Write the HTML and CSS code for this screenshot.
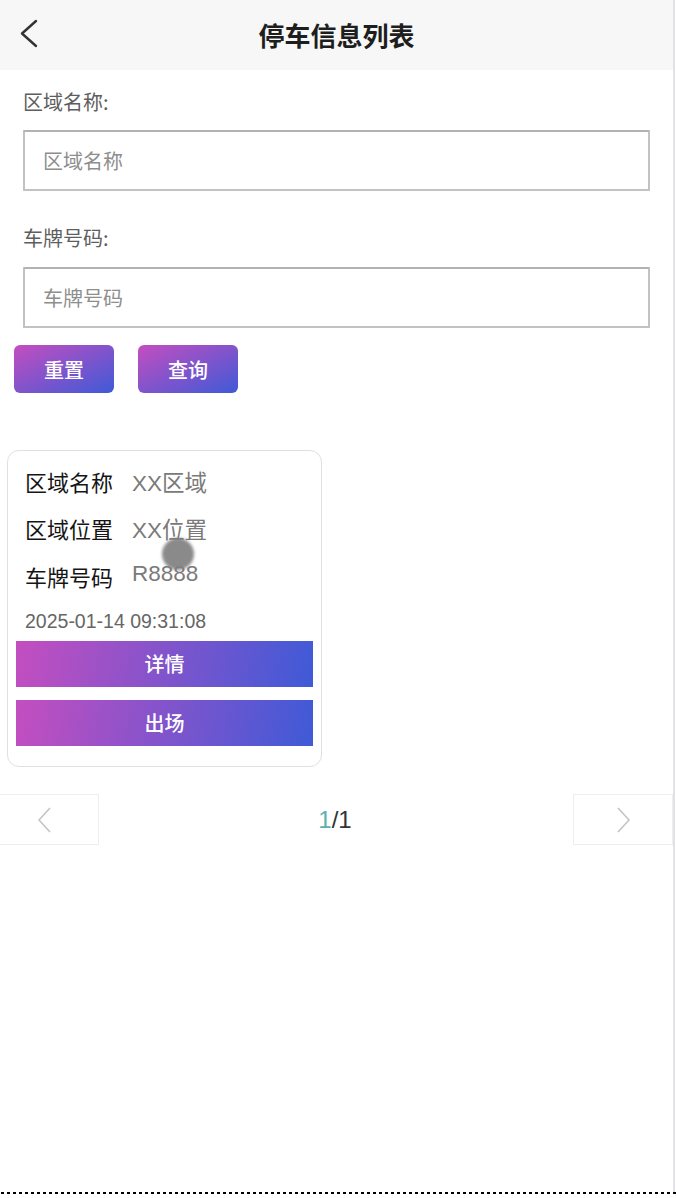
FILE: index.html
```html
<!DOCTYPE html>
<html lang="zh-CN">
<head>
<meta charset="utf-8">
<title>停车信息列表</title>
<link rel="stylesheet" href="styles.css">
</head>
<body>
<div class="page">
  <header class="topbar">
    <svg class="back" width="24" height="32" viewBox="0 0 24 32"><polyline points="18,4 4,16.5 18,29" fill="none" stroke="#333" stroke-width="2.4" stroke-linecap="round" stroke-linejoin="round"/></svg>
    <h1 class="title">停车信息列表</h1>
  </header>

  <form class="search">
    <div class="field">
      <label class="field-label">区域名称:</label>
      <input class="field-input" type="text" placeholder="区域名称">
    </div>
    <div class="field field-second">
      <label class="field-label">车牌号码:</label>
      <input class="field-input" type="text" placeholder="车牌号码">
    </div>
    <div class="actions">
      <button type="button" class="btn-small">重置</button>
      <button type="button" class="btn-small">查询</button>
    </div>
  </form>

  <div class="card">
    <div class="row"><span class="row-label">区域名称</span><span class="row-value">XX区域</span></div>
    <div class="row"><span class="row-label">区域位置</span><span class="row-value">XX位置</span></div>
    <div class="row"><span class="row-label row-label-low">车牌号码</span><span class="row-value">R8888</span></div>
    <div class="date">2025-01-14 09:31:08</div>
    <button type="button" class="btn-wide">详情</button>
    <button type="button" class="btn-wide btn-wide-second">出场</button>
    <span class="touch"></span>
  </div>

  <div class="pager">
    <div class="pager-btn pager-prev">
      <svg width="16" height="28" viewBox="0 0 16 28"><polyline points="13,2 2,14 13,26" fill="none" stroke="#c4c4c4" stroke-width="1.6" stroke-linejoin="round"/></svg>
    </div>
    <div class="pager-count"><span class="pager-current">1</span>/1</div>
    <div class="pager-btn pager-next">
      <svg width="16" height="28" viewBox="0 0 16 28"><polyline points="3,2 14,14 3,26" fill="none" stroke="#c4c4c4" stroke-width="1.6" stroke-linejoin="round"/></svg>
    </div>
  </div>
</div>
<div class="dots"></div>
</body>
</html>
```

FILE: styles.css
```css
* { box-sizing: border-box; }

html, body {
  margin: 0;
  padding: 0;
  background: #fff;
}

body {
  font-family: "Liberation Sans", "Noto Sans CJK SC", sans-serif;
  color: #222;
}

.page {
  position: relative;
  width: 675px;
  height: 1192px;
  border-right: 2px solid #e2e2e5;
}

.topbar {
  height: 70px;
  background: #f7f7f7;
  display: flex;
  align-items: center;
  justify-content: center;
  position: relative;
}

.back {
  position: absolute;
  left: 18px;
  top: 17px;
}

.title {
  margin: 0;
  font-family: "Noto Sans CJK SC", sans-serif;
  font-size: 26px;
  font-weight: 700;
  color: #1e1e1e;
  line-height: 70px;
}

.search {
  display: flex;
  flex-direction: column;
  padding: 16px 24px 0 23px;
  margin: 0;
}

.field {
  display: flex;
  flex-direction: column;
  gap: 12px;
}

.field-second {
  margin-top: 31px;
  gap: 13px;
}

.field-label {
  font-family: "Noto Sans CJK SC", sans-serif;
  font-size: 20px;
  line-height: 32px;
  height: 32px;
  color: #5e5e5e;
}

.field-input {
  width: 627px;
  height: 61px;
  border: 2px solid #c3c1c3;
  border-top-color: #b3b1b3;
  border-radius: 1px;
  padding: 0 18px;
  font-family: "Noto Sans CJK SC", sans-serif;
  font-size: 20px;
  color: #333;
  background: #fff;
  outline: none;
}

.field-input::placeholder {
  color: #8e8e8e;
}

.actions {
  display: flex;
  gap: 24px;
  margin: 17px 0 0 -9px;
}

.btn-small {
  width: 100px;
  height: 48px;
  border: none;
  border-radius: 6px;
  background: linear-gradient(to bottom right, #c44ec0, #3f5ad7);
  color: #fff;
  font-family: "Noto Sans CJK SC", sans-serif;
  font-size: 20px;
  font-weight: 500;
  padding: 0;
}

.card {
  position: relative;
  margin: 57px 0 0 7px;
  width: 315px;
  height: 317px;
  border: 1px solid #e0e0e0;
  border-radius: 12px;
  padding: 7px 8px 0 8px;
}

.row {
  display: flex;
  align-items: center;
  height: 46.5px;
  padding-left: 9px;
}

.row-label {
  width: 107px;
  font-family: "Noto Sans CJK SC", sans-serif;
  font-size: 22px;
  color: #151515;
}

.row-label-low {
  position: relative;
  top: 2px;
}

.row-value {
  font-size: 22.5px;
  color: #7a7a7a;
}

.date {
  padding-left: 9px;
  margin-top: 9px;
  font-size: 19.5px;
  line-height: 28px;
  color: #666;
}

.btn-wide {
  display: block;
  width: 297px;
  height: 46px;
  margin-top: 6px;
  border: none;
  border-radius: 0;
  background: linear-gradient(100deg, #c44ec0, #3f5ad7);
  color: #fff;
  font-family: "Noto Sans CJK SC", sans-serif;
  font-size: 20px;
  font-weight: 500;
  padding: 0;
}

.btn-wide-second {
  margin-top: 13px;
}

.touch {
  position: absolute;
  left: 154px;
  top: 87px;
  width: 32px;
  height: 32px;
  border-radius: 50%;
  background: #7e7e7e;
  opacity: 0.9;
  filter: blur(1.5px);
}

.pager {
  margin-top: 27px;
  height: 51px;
  display: flex;
  align-items: center;
  justify-content: space-between;
}

.pager-btn {
  width: 100px;
  height: 51px;
  border: 1px solid #eeeeee;
  display: flex;
  align-items: center;
  justify-content: center;
}

.pager-prev {
  margin-left: -1px;
  padding-right: 8px;
}

.pager-count {
  font-size: 24px;
  color: #333;
  margin-left: -2px;
}

.pager-current {
  color: #5bb1b0;
}

.dots {
  width: 675px;
  height: 2px;
  background: repeating-linear-gradient(to right, #000 0, #000 3px, transparent 3px, transparent 6px);
  margin-left: 1px;
}
```
